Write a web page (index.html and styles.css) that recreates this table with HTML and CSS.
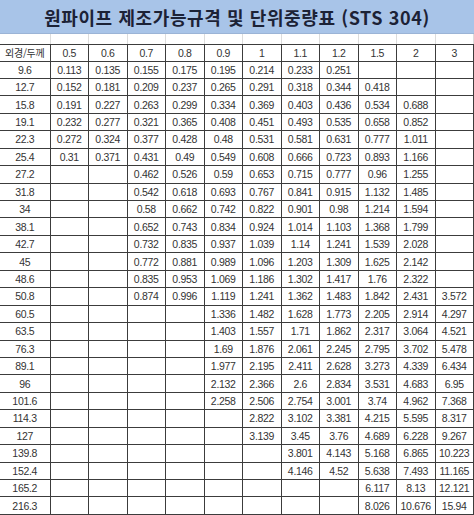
FILE: index.html
```html
<!DOCTYPE html>
<html lang="ko">
<head>
<meta charset="utf-8">
<title>원파이프 제조가능규격 및 단위중량표</title>
<link rel="stylesheet" href="styles.css">
</head>
<body>
<div class="sheet">
  <div class="title">원파이프 제조가능규격 및 단위중량표 (STS 304)</div>
  <table class="grid">
    <colgroup>
      <col class="c0"><col><col><col><col><col><col><col><col><col><col><col>
    </colgroup>
    <tr class="spacer"><td></td><td></td><td></td><td></td><td></td><td></td><td></td><td></td><td></td><td></td><td></td><td></td></tr>
    <tr class="head"><td class="ko">외경/두께</td><td>0.5</td><td>0.6</td><td>0.7</td><td>0.8</td><td>0.9</td><td>1</td><td>1.1</td><td>1.2</td><td>1.5</td><td>2</td><td>3</td></tr>
    <tr><td>9.6</td><td>0.113</td><td>0.135</td><td>0.155</td><td>0.175</td><td>0.195</td><td>0.214</td><td>0.233</td><td>0.251</td><td></td><td></td><td></td></tr>
    <tr><td>12.7</td><td>0.152</td><td>0.181</td><td>0.209</td><td>0.237</td><td>0.265</td><td>0.291</td><td>0.318</td><td>0.344</td><td>0.418</td><td></td><td></td></tr>
    <tr><td>15.8</td><td>0.191</td><td>0.227</td><td>0.263</td><td>0.299</td><td>0.334</td><td>0.369</td><td>0.403</td><td>0.436</td><td>0.534</td><td>0.688</td><td></td></tr>
    <tr><td>19.1</td><td>0.232</td><td>0.277</td><td>0.321</td><td>0.365</td><td>0.408</td><td>0.451</td><td>0.493</td><td>0.535</td><td>0.658</td><td>0.852</td><td></td></tr>
    <tr><td>22.3</td><td>0.272</td><td>0.324</td><td>0.377</td><td>0.428</td><td>0.48</td><td>0.531</td><td>0.581</td><td>0.631</td><td>0.777</td><td>1.011</td><td></td></tr>
    <tr><td>25.4</td><td>0.31</td><td>0.371</td><td>0.431</td><td>0.49</td><td>0.549</td><td>0.608</td><td>0.666</td><td>0.723</td><td>0.893</td><td>1.166</td><td></td></tr>
    <tr><td>27.2</td><td></td><td></td><td>0.462</td><td>0.526</td><td>0.59</td><td>0.653</td><td>0.715</td><td>0.777</td><td>0.96</td><td>1.255</td><td></td></tr>
    <tr><td>31.8</td><td></td><td></td><td>0.542</td><td>0.618</td><td>0.693</td><td>0.767</td><td>0.841</td><td>0.915</td><td>1.132</td><td>1.485</td><td></td></tr>
    <tr><td>34</td><td></td><td></td><td>0.58</td><td>0.662</td><td>0.742</td><td>0.822</td><td>0.901</td><td>0.98</td><td>1.214</td><td>1.594</td><td></td></tr>
    <tr><td>38.1</td><td></td><td></td><td>0.652</td><td>0.743</td><td>0.834</td><td>0.924</td><td>1.014</td><td>1.103</td><td>1.368</td><td>1.799</td><td></td></tr>
    <tr><td>42.7</td><td></td><td></td><td>0.732</td><td>0.835</td><td>0.937</td><td>1.039</td><td>1.14</td><td>1.241</td><td>1.539</td><td>2.028</td><td></td></tr>
    <tr><td>45</td><td></td><td></td><td>0.772</td><td>0.881</td><td>0.989</td><td>1.096</td><td>1.203</td><td>1.309</td><td>1.625</td><td>2.142</td><td></td></tr>
    <tr><td>48.6</td><td></td><td></td><td>0.835</td><td>0.953</td><td>1.069</td><td>1.186</td><td>1.302</td><td>1.417</td><td>1.76</td><td>2.322</td><td></td></tr>
    <tr><td>50.8</td><td></td><td></td><td>0.874</td><td>0.996</td><td>1.119</td><td>1.241</td><td>1.362</td><td>1.483</td><td>1.842</td><td>2.431</td><td>3.572</td></tr>
    <tr><td>60.5</td><td></td><td></td><td></td><td></td><td>1.336</td><td>1.482</td><td>1.628</td><td>1.773</td><td>2.205</td><td>2.914</td><td>4.297</td></tr>
    <tr><td>63.5</td><td></td><td></td><td></td><td></td><td>1.403</td><td>1.557</td><td>1.71</td><td>1.862</td><td>2.317</td><td>3.064</td><td>4.521</td></tr>
    <tr><td>76.3</td><td></td><td></td><td></td><td></td><td>1.69</td><td>1.876</td><td>2.061</td><td>2.245</td><td>2.795</td><td>3.702</td><td>5.478</td></tr>
    <tr><td>89.1</td><td></td><td></td><td></td><td></td><td>1.977</td><td>2.195</td><td>2.411</td><td>2.628</td><td>3.273</td><td>4.339</td><td>6.434</td></tr>
    <tr><td>96</td><td></td><td></td><td></td><td></td><td>2.132</td><td>2.366</td><td>2.6</td><td>2.834</td><td>3.531</td><td>4.683</td><td>6.95</td></tr>
    <tr><td>101.6</td><td></td><td></td><td></td><td></td><td>2.258</td><td>2.506</td><td>2.754</td><td>3.001</td><td>3.74</td><td>4.962</td><td>7.368</td></tr>
    <tr><td>114.3</td><td></td><td></td><td></td><td></td><td></td><td>2.822</td><td>3.102</td><td>3.381</td><td>4.215</td><td>5.595</td><td>8.317</td></tr>
    <tr><td>127</td><td></td><td></td><td></td><td></td><td></td><td>3.139</td><td>3.45</td><td>3.76</td><td>4.689</td><td>6.228</td><td>9.267</td></tr>
    <tr><td>139.8</td><td></td><td></td><td></td><td></td><td></td><td></td><td>3.801</td><td>4.143</td><td>5.168</td><td>6.865</td><td>10.223</td></tr>
    <tr><td>152.4</td><td></td><td></td><td></td><td></td><td></td><td></td><td>4.146</td><td>4.52</td><td>5.638</td><td>7.493</td><td>11.165</td></tr>
    <tr><td>165.2</td><td></td><td></td><td></td><td></td><td></td><td></td><td></td><td></td><td>6.117</td><td>8.13</td><td>12.121</td></tr>
    <tr><td>216.3</td><td></td><td></td><td></td><td></td><td></td><td></td><td></td><td></td><td>8.026</td><td>10.676</td><td>15.94</td></tr>
  </table>
</div>
</body>
</html>
```

FILE: styles.css
```css
html, body {
  margin: 0;
  padding: 0;
  background: #ffffff;
}

.sheet {
  width: 474px;
  height: 515px;
  overflow: hidden;
}

.title {
  height: 34px;
  box-sizing: border-box;
  background: #a8c4e8;
  border-bottom: 1px solid #9bb4d6;
  display: flex;
  align-items: center;
  justify-content: center;
  padding-top: 1px;
  font-family: "Noto Sans CJK KR", "Liberation Sans", sans-serif;
  font-weight: 700;
  font-size: 18px;
  letter-spacing: 0.6px;
  color: #1c2236;
}

.grid {
  width: 474px;
  table-layout: fixed;
  border-collapse: collapse;
  font-family: "Liberation Sans", "Noto Sans CJK KR", sans-serif;
  font-size: 10.5px;
  color: #333333;
}

.grid col.c0 {
  width: 50px;
}

.grid td {
  border: 1px solid #3c3c3c;
  padding: 0;
  text-align: center;
  vertical-align: middle;
  line-height: 12px;
  letter-spacing: -0.3px;
  white-space: nowrap;
  overflow: hidden;
}

.grid td:first-child {
  border-left: none;
}

.grid tr {
  height: 17.45px;
}

.grid tr.spacer {
  height: 10px;
}

.grid tr.spacer td {
  border-top: none;
  border-left-color: #dcdcdc;
  border-right-color: #dcdcdc;
}

.grid tr.spacer td:first-child {
  border-left: none;
}

.grid tr.head {
  height: 17px;
}

.grid td.ko {
  font-family: "Noto Sans CJK KR", sans-serif;
  font-size: 10px;
  letter-spacing: -0.2px;
}
```
